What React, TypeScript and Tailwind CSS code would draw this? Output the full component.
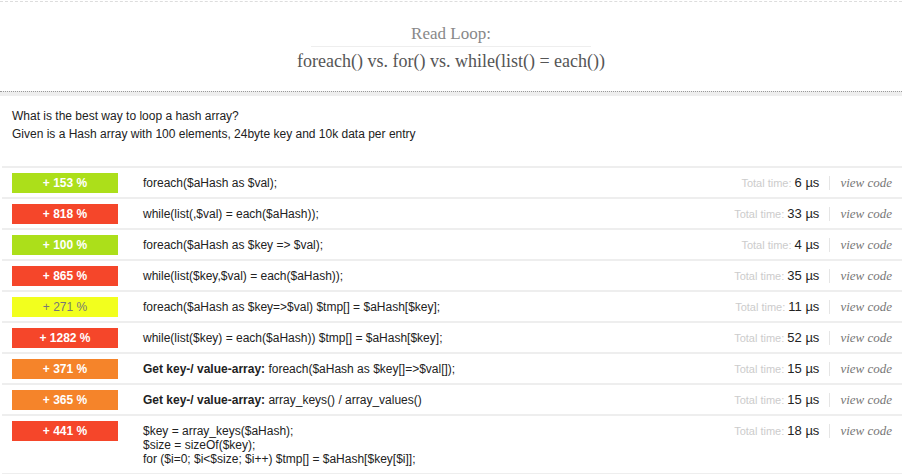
const ROWS = [
  { pct: '+ 153 %', color: 'bg-[#acdf1a]', text: 'text-white font-bold', code: ['foreach($aHash as $val);'], time: '6' },
  { pct: '+ 818 %', color: 'bg-[#f5462a]', text: 'text-white font-bold', code: ['while(list(,$val) = each($aHash));'], time: '33' },
  { pct: '+ 100 %', color: 'bg-[#acdf1a]', text: 'text-white font-bold', code: ['foreach($aHash as $key => $val);'], time: '4' },
  { pct: '+ 865 %', color: 'bg-[#f5462a]', text: 'text-white font-bold', code: ['while(list($key,$val) = each($aHash));'], time: '35' },
  { pct: '+ 271 %', color: 'bg-[#f2ff1e]', text: 'text-[#777]', code: ['foreach($aHash as $key=>$val) $tmp[] = $aHash[$key];'], time: '11' },
  { pct: '+ 1282 %', color: 'bg-[#f5462a]', text: 'text-white font-bold', code: ['while(list($key) = each($aHash)) $tmp[] = $aHash[$key];'], time: '52' },
  { pct: '+ 371 %', color: 'bg-[#f5842a]', text: 'text-white font-bold', bold: 'Get key-/ value-array:', code: ['foreach($aHash as $key[]=>$val[]);'], time: '15' },
  { pct: '+ 365 %', color: 'bg-[#f5842a]', text: 'text-white font-bold', bold: 'Get key-/ value-array:', code: ['array_keys() / array_values()'], time: '15' },
  {
    pct: '+ 441 %',
    color: 'bg-[#f5462a]',
    text: 'text-white font-bold',
    code: ['$key = array_keys($aHash);', '$size = sizeOf($key);', 'for ($i=0; $i<$size; $i++) $tmp[] = $aHash[$key[$i]];'],
    time: '18',
  },
]

export default function App() {
  return (
    <div className="w-[902px] bg-white font-['Liberation_Sans',Arial,sans-serif] text-[#222]">
      {/* Header */}
      <div className="border-t border-dashed border-[#ddd] mt-px">
        <div className="flex flex-col items-center pt-[21px] pb-[18px] font-['Liberation_Serif',serif]">
          <div className="text-[17px] leading-[22px] text-[#888] border-b border-[#eee] w-[280px] text-center pb-[1px]">
            Read Loop:
          </div>
          <div className="text-[18px] leading-[24px] text-[#555] mt-[2px]">
            foreach() vs. for() vs. while(list() = each())
          </div>
        </div>
        <div className="border-t border-dotted border-[#999] h-[5px] bg-[#eee]" />
      </div>

      {/* Description */}
      <div className="px-[12px] pt-[11px] pb-[23px] text-[12px] leading-[18px]">
        <div>What is the best way to loop a hash array?</div>
        <div>Given is a Hash array with 100 elements, 24byte key and 10k data per entry</div>
      </div>

      {/* Results */}
      <div className="ml-[2px] border-t-2 border-[#eee]">
        {ROWS.map((r, i) => (
          <div
            key={i}
            className={`flex items-start pl-[10px] pr-[10px] pt-[5px] border-b-2 border-[#eee] ${r.code.length > 1 ? 'pb-[7px]' : 'pb-[4px]'}`}
          >
            <div className={`w-[106px] h-[20px] flex items-center justify-center text-[12px] ${r.color} ${r.text}`}>
              {r.pct}
            </div>
            <div className="ml-[25px] flex-1 text-[12px] leading-[14px] pt-[3px]">
              {r.code.map((c, j) => (
                <div key={j}>
                  {r.bold && <b>{r.bold} </b>}
                  {c}
                </div>
              ))}
            </div>
            <div className="flex items-center h-[20px]">
              <span className="text-[11px] text-[#ccc]">Total time: </span>
              <span className="text-[13px] text-[#222] ml-[3px]">{r.time} µs</span>
              <span className="w-px h-[14px] bg-[#e5e5e5] ml-[10px] mr-[10px]" />
              <span className="font-['Liberation_Serif',serif] italic text-[13px] text-[#777]">view code</span>
            </div>
          </div>
        ))}
      </div>
    </div>
  )
}
